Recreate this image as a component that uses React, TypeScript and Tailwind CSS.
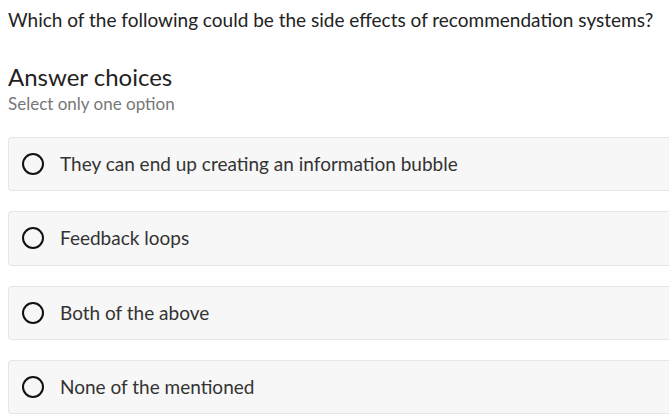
import React from "react";

const options = [
  "They can end up creating an information bubble",
  "Feedback loops",
  "Both of the above",
  "None of the mentioned",
];

export default function App() {
  return (
    <div className="w-[669px] h-[420px] overflow-hidden bg-white font-['Lato',sans-serif] text-[#222]">
      <div className="pl-2 pt-[7px]">
        <p className="text-[19px] leading-[26px] text-[#222]">
          Which of the following could be the side effects of recommendation systems?
        </p>
        <h2 className="mt-[30px] text-[24px] leading-[28px] text-[#222]">Answer choices</h2>
        <p className="mt-[2px] text-[17px] leading-[22px] text-[#777]">Select only one option</p>
        <div className="mt-[22px] flex flex-col gap-[20px]">
          {options.map((o) => (
            <div
              key={o}
              className="h-[54.33px] -mr-2 flex items-center rounded-l-[4px] border border-r-0 border-[#e6e6e6] bg-[#f7f7f7] pl-[13px]"
            >
              <span className="w-[22px] h-[22px] rounded-full border-[2.5px] border-[#111] bg-transparent shrink-0" />
              <span className="ml-[16px] text-[19px] text-[#333]">{o}</span>
            </div>
          ))}
        </div>
      </div>
    </div>
  );
}
